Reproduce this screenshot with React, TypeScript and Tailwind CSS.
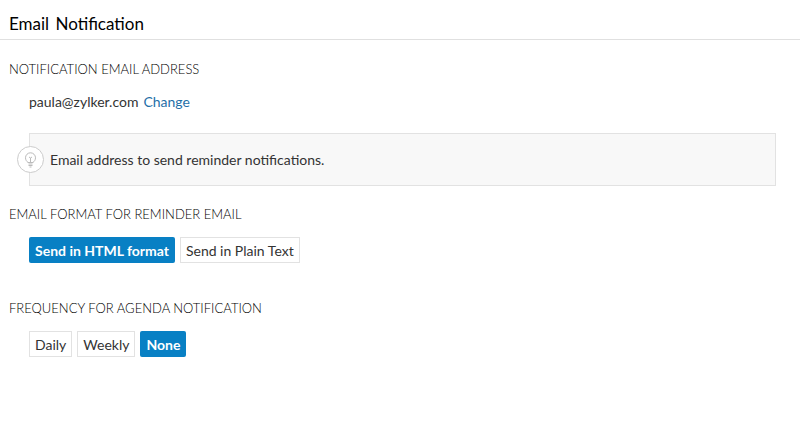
export default function App() {
  const font = { };
  return (
    <div className="w-[800px] h-[444px] bg-white font-['Lato',sans-serif] text-[#333] overflow-hidden">
      <div className="h-10 border-b border-[#e0e0e0] pl-[9px] pt-[13px] text-[17px] leading-[22px] text-black [word-spacing:2px]">Email Notification</div>
      <div className="pl-[9px] pt-[21px] text-[13px] leading-4 font-light text-black">NOTIFICATION EMAIL ADDRESS</div>
      <div className="pl-[29px] pt-[16px] text-[14px] leading-[18px] flex gap-[5px]">
        <span>paula@zylker.com</span><span className="text-[#1f6fa8]">Change</span>
      </div>
      <div className="relative ml-[29px] mt-[22px] w-[747px] h-[53px] bg-[#f8f8f8] border border-[#e2e2e2] flex items-center pl-5 text-[14px]">
        <div className="absolute left-[-13px] top-[12px] w-[27px] h-[27px] rounded-full border border-[#ccc] bg-white flex items-center justify-center">
          <svg width="15" height="17" viewBox="0 0 15 17" fill="none" stroke="#bbb" strokeWidth="1"><path d="M5 11.5C3.5 10.3 2.5 8.8 2.5 6.8a5 5 0 0 1 10 0c0 2-1 3.5-2.500 4.700z" /><path d="M5.500 13h4M5.500 14.500h4M6.500 16h2M7.500 11.500V7M6 6l1.500 1L9 6" /></svg>
        </div>
        Email address to send reminder notifications.
      </div>
      <div className="pl-[9px] pt-[20px] text-[13px] leading-4 font-light text-black">EMAIL FORMAT FOR REMINDER EMAIL</div>
      <div className="pl-[29px] pt-[15px] flex gap-[5px] text-[14px]">
        <span className="h-[26px] px-[6px] flex items-center rounded-[2px] bg-[#0880c4] text-white font-bold">Send in HTML format</span>
        <span className="h-[26px] px-[5px] flex items-center border border-[#e2e2e2]">Send in Plain Text</span>
      </div>
      <div className="pl-[9px] pt-[37px] text-[13px] leading-4 font-light text-black">FREQUENCY FOR AGENDA NOTIFICATION</div>
      <div className="pl-[29px] pt-[15px] flex gap-[5px] text-[14px]">
        <span className="h-[26px] px-[5px] flex items-center border border-[#e2e2e2]">Daily</span>
        <span className="h-[26px] px-[5px] flex items-center border border-[#e2e2e2]">Weekly</span>
        <span className="h-[26px] px-[6px] flex items-center rounded-[2px] bg-[#0880c4] text-white font-bold">None</span>
      </div>
    </div>
  );
}
